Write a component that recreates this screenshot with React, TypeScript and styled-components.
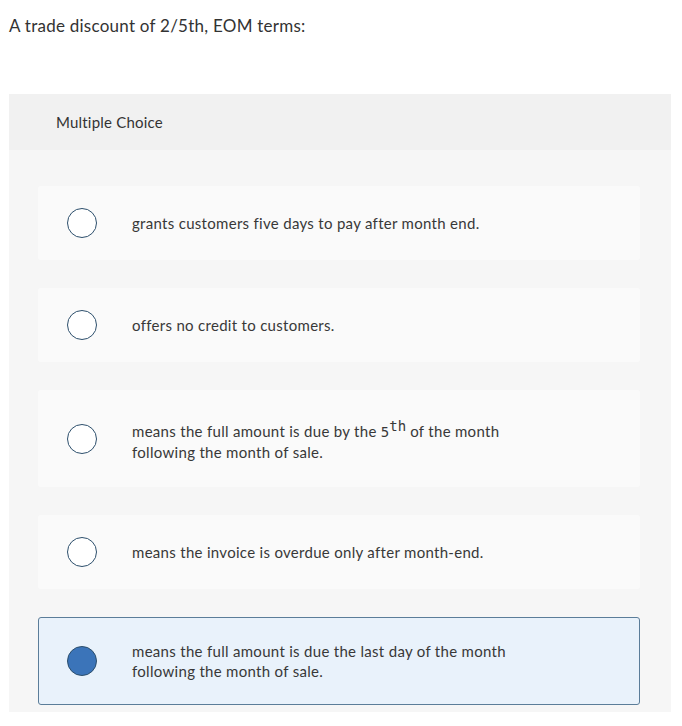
import React from "react";
import styled, { createGlobalStyle } from "styled-components";

const Global = createGlobalStyle`
  html, body { margin: 0; padding: 0; background: #ffffff; }
  body { font-family: Lato, "Open Sans", sans-serif; color: #333333; }
`;

const Page = styled.div`
  padding: 15px 11px 0 9px;
`;

const Question = styled.div`
  font-size: 17px;
  line-height: 22px;
  letter-spacing: 0.25px;
  color: #333333;
  margin-bottom: 57px;
`;

const Panel = styled.div`
  background: #f6f6f6;
  padding-bottom: 7px;
`;

const Header = styled.div`
  background: #f1f1f1;
  height: 56px;
  display: flex;
  align-items: center;
  padding-left: 47px;
  font-size: 15px;
  letter-spacing: 0.2px;
  color: #333333;
`;

const Options = styled.div`
  display: flex;
  flex-direction: column;
  gap: 28px;
  padding: 36px 31px 0 29px;
`;

const Option = styled.div<{ $selected?: boolean; $h: number }>`
  display: flex;
  align-items: center;
  min-height: ${(p) => p.$h}px;
  box-sizing: border-box;
  background: ${(p) => (p.$selected ? "#e9f2fb" : "#fafafa")};
  border: ${(p) => (p.$selected ? "1px solid #5b7d99" : "1px solid transparent")};
  border-radius: 3px;
  padding-left: 28px;
`;

const Radio = styled.span<{ $selected?: boolean }>`
  flex: none;
  width: 30px;
  height: 30px;
  box-sizing: border-box;
  border-radius: 50%;
  border: 1.5px solid #2d4f6c;
  background: ${(p) => (p.$selected ? "#3b74b9" : "#ffffff")};
  margin-right: 35px;
`;

const Label = styled.div`
  font-size: 15px;
  line-height: 20px;
  letter-spacing: 0.3px;
  color: #383838;
`;

const Mono = styled.span`
  font-family: "DejaVu Sans Mono", monospace;
  font-size: 14px;
  letter-spacing: 0;
`;

const Sup = styled.sup`
  font-family: "DejaVu Sans Mono", monospace;
  font-size: 14px;
  letter-spacing: 0;
  vertical-align: 6px;
  line-height: 20px;
`;

const options: { text: React.ReactNode; h: number; selected?: boolean }[] = [
  { text: "grants customers five days to pay after month end.", h: 74 },
  { text: "offers no credit to customers.", h: 74 },
  {
    text: (
      <>
        means the full amount is due by the <Mono>5</Mono>
        <Sup>th</Sup> of the month
        <br />
        following the month of sale.
      </>
    ),
    h: 97,
  },
  { text: "means the invoice is overdue only after month-end.", h: 74 },
  {
    text: (
      <>
        means the full amount is due the last day of the month
        <br />
        following the month of sale.
      </>
    ),
    h: 88,
    selected: true,
  },
];

export default function App() {
  return (
    <>
      <Global />
      <Page>
        <Question>A trade discount of 2/5th, EOM terms:</Question>
        <Panel>
          <Header>Multiple Choice</Header>
          <Options>
            {options.map((o, i) => (
              <Option key={i} $h={o.h} $selected={o.selected}>
                <Radio $selected={o.selected} />
                <Label>{o.text}</Label>
              </Option>
            ))}
          </Options>
        </Panel>
      </Page>
    </>
  );
}
